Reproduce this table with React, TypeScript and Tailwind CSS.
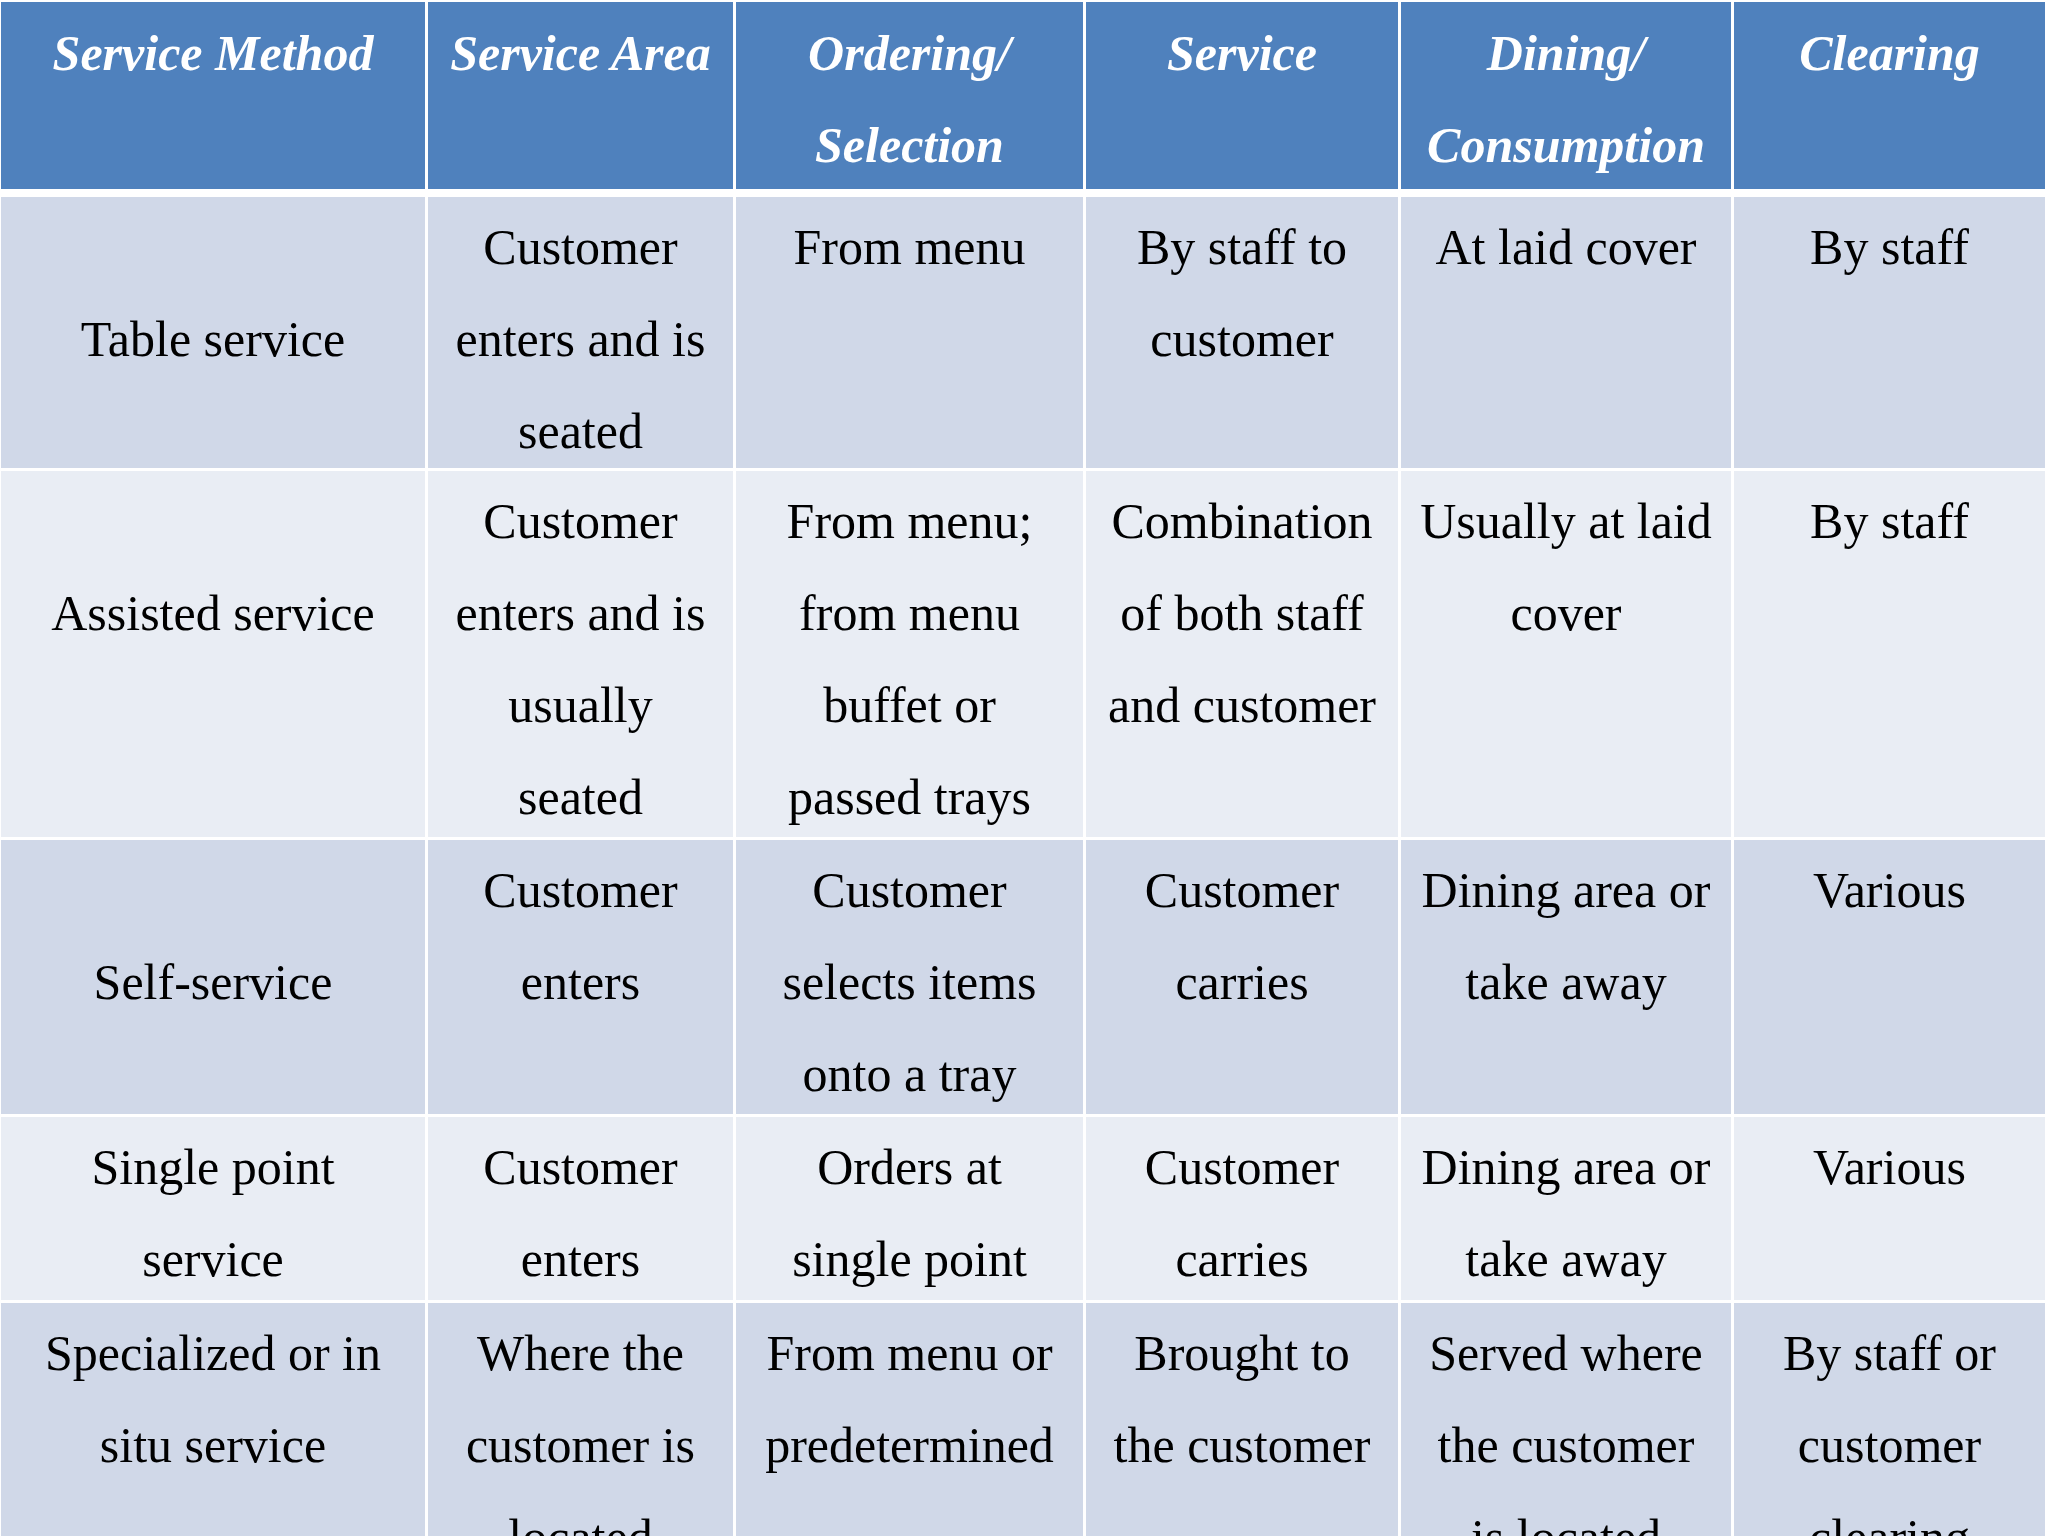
const headers = [
  ["Service Method"],
  ["Service Area"],
  ["Ordering/", "Selection"],
  ["Service"],
  ["Dining/", "Consumption"],
  ["Clearing"],
];

const rows: string[][][] = [
  [
    ["", "Table service"],
    ["Customer", "enters and is", "seated"],
    ["From menu"],
    ["By staff to", "customer"],
    ["At laid cover"],
    ["By staff"],
  ],
  [
    ["", "Assisted service"],
    ["Customer", "enters and is", "usually", "seated"],
    ["From menu;", "from menu", "buffet or", "passed trays"],
    ["Combination", "of both staff", "and customer"],
    ["Usually at laid", "cover"],
    ["By staff"],
  ],
  [
    ["", "Self-service"],
    ["Customer", "enters"],
    ["Customer", "selects items", "onto a tray"],
    ["Customer", "carries"],
    ["Dining area or", "take away"],
    ["Various"],
  ],
  [
    ["Single point", "service"],
    ["Customer", "enters"],
    ["Orders at", "single point"],
    ["Customer", "carries"],
    ["Dining area or", "take away"],
    ["Various"],
  ],
  [
    ["Specialized or in", "situ service"],
    ["Where the", "customer is", "located"],
    ["From menu or", "predetermined"],
    ["Brought to", "the customer"],
    ["Served where", "the customer", "is located"],
    ["By staff or", "customer", "clearing"],
  ],
];

const Lines = ({ lines }: { lines: string[] }) => (
  <>
    {lines.map((l, i) => (
      <div key={i} className="whitespace-nowrap h-[92px]">
        {l || "\u00a0"}
      </div>
    ))}
  </>
);

export default function App() {
  return (
    <div className="w-[2048px] h-[1536px] overflow-hidden bg-white pt-[2px] pl-px font-['Liberation_Serif','Times_New_Roman',serif] text-[50px] leading-[92px]">
      <div className="grid grid-cols-[424px_305px_347px_312px_330px_311px] grid-rows-[192px_271px_366px_274px_183px_400px] gap-x-[3px] gap-y-[3px]">
        {headers.map((h, i) => (
          <div
            key={i}
            className="bg-[#4f81bd] text-white font-bold italic text-center pt-[5px] h-[187px] self-start"
          >
            <Lines lines={h} />
          </div>
        ))}
        {rows.map((row, r) =>
          row.map((cell, c) => (
            <div
              key={`${r}-${c}`}
              className={`text-black text-center pt-[4px] ${
                r % 2 === 0 ? "bg-[#d0d8e8]" : "bg-[#e9edf4]"
              }`}
            >
              <Lines lines={cell} />
            </div>
          ))
        )}
      </div>
    </div>
  );
}
